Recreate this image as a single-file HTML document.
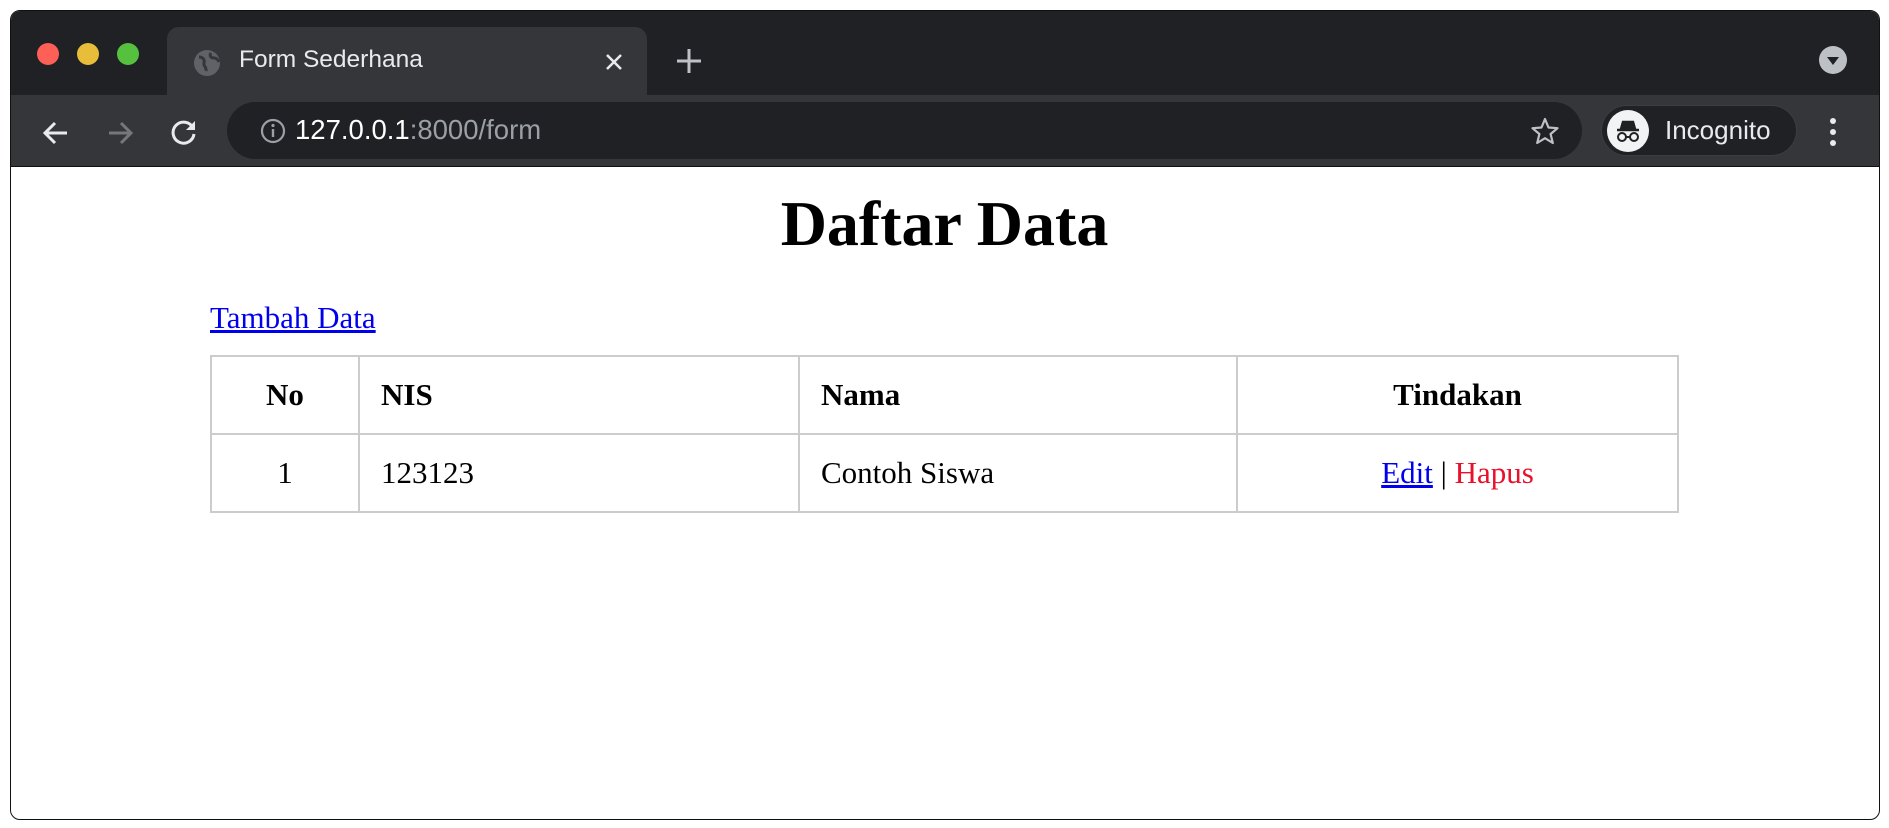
<!DOCTYPE html>
<html><head><meta charset="utf-8"><style>
*{margin:0;padding:0;box-sizing:border-box}
body{width:1889px;height:828px;background:#fff;position:relative;overflow:hidden;font-family:"Liberation Serif",serif}
.win{position:absolute;left:10px;top:10px;width:1870px;height:810px;border:1.5px solid #111;border-radius:10px;overflow:hidden;background:#fff}
.tabs{position:absolute;left:0;top:0;width:100%;height:84px;background:#202124}
.tool{position:absolute;left:0;top:84px;width:100%;height:72px;background:#35363a;border-bottom:1px solid #111}
.dot{position:absolute;top:32px;width:22px;height:22px;border-radius:50%}
.tab{position:absolute;left:156px;top:16px;width:480px;height:70px;background:#35363a;border-radius:12px 12px 0 0}
.sans{font-family:"Liberation Sans",sans-serif}
.omni{position:absolute;left:216px;top:91px;width:1355px;height:57px;background:#202124;border-radius:29px}
.pill{position:absolute;left:1590px;top:94px;width:196px;height:51px;background:#202124;border-radius:26px;border:1px solid #3c3d40}
h1{position:absolute;left:0;width:1889px;top:184px;text-align:center;font-size:64px;font-weight:bold;line-height:80px}
a{color:#0000ee}
.add{position:absolute;left:210px;top:298px;font-size:31px;line-height:40px}
table{position:absolute;left:210px;top:355px;width:1467px;border-collapse:collapse;table-layout:fixed;font-size:31px}
td,th{border:2px solid #ccc;height:78px;padding:0 21px;vertical-align:middle}
th{font-weight:bold}
</style></head><body>
<div class="win">
<div class="tabs"></div>
<div class="dot" style="left:26px;background:#fe5f57"></div>
<div class="dot" style="left:66px;background:#e8bd3a"></div>
<div class="dot" style="left:106px;background:#56c13f"></div>
<div class="tab">
 <svg style="position:absolute;left:26px;top:22px" width="28" height="28" viewBox="0 0 28 28"><circle cx="14" cy="14" r="13" fill="#5f6368"/><path d="M6 8c4 0 6 3 5 6s3 4 2 8M18 4c-2 3 0 5 3 5s4 2 5 4" stroke="#35363a" stroke-width="3" fill="none"/></svg>
 <div class="sans" style="position:absolute;left:72px;top:19px;color:#e8eaed;font-size:24.5px">Form Sederhana</div>
 <svg style="position:absolute;left:438px;top:26px" width="18" height="18" viewBox="0 0 18 18"><path d="M2 2L16 16M16 2L2 16" stroke="#e8eaed" stroke-width="2.5"/></svg>
</div>
<svg style="position:absolute;left:665px;top:37px" width="26" height="26" viewBox="0 0 26 26"><path d="M13 1V25M1 13H25" stroke="#bdc1c6" stroke-width="3"/></svg>
<svg style="position:absolute;left:1808px;top:35px" width="28" height="28" viewBox="0 0 28 28"><circle cx="14" cy="14" r="14" fill="#bdc1c6"/><path d="M8 11H20L14 19Z" fill="#202124"/></svg>
<div class="tool"></div>
<svg style="position:absolute;left:30px;top:107px" width="30" height="30" viewBox="0 0 30 30"><path d="M26 15H5M14 5L4 15L14 25" stroke="#e8eaed" stroke-width="3" fill="none"/></svg>
<svg style="position:absolute;left:94px;top:107px" width="30" height="30" viewBox="0 0 30 30"><path d="M4 15H25M16 5L26 15L16 25" stroke="#75777b" stroke-width="3" fill="none"/></svg>
<svg style="position:absolute;left:158px;top:106px" width="30" height="30" viewBox="0 0 30 30"><path d="M24 11A10.5 10.5 0 1 0 25 17" stroke="#e8eaed" stroke-width="3" fill="none"/><path d="M26 4V13H17Z" fill="#e8eaed"/></svg>
<div class="omni">
 <svg style="position:absolute;left:33px;top:16px" width="26" height="26" viewBox="0 0 26 26"><circle cx="13" cy="13" r="11" stroke="#9aa0a6" stroke-width="2.2" fill="none"/><path d="M13 11V19" stroke="#9aa0a6" stroke-width="2.4"/><circle cx="13" cy="7.5" r="1.6" fill="#9aa0a6"/></svg>
 <div class="sans" style="position:absolute;left:68px;top:12px;font-size:27.5px;color:#fff">127.0.0.1<span style="color:#9aa0a6">:8000/form</span></div>
 <svg style="position:absolute;left:1304px;top:15px" width="28" height="28" viewBox="0 0 28 28"><path d="M14 2L17.5 10.5L26.5 11.2L19.6 17L21.8 26L14 21.2L6.2 26L8.4 17L1.5 11.2L10.5 10.5Z" stroke="#bdc1c6" stroke-width="2.2" fill="none" stroke-linejoin="round"/></svg>
</div>
<div class="pill">
 <svg style="position:absolute;left:5px;top:4px" width="42" height="42" viewBox="0 0 42 42"><circle cx="21" cy="21" r="21" fill="#f1f3f4"/><path d="M14 19L16 12H26L28 19Z M10 20H32" stroke="#202124" stroke-width="2.5" fill="#202124"/><circle cx="15" cy="27" r="4" stroke="#202124" stroke-width="2" fill="none"/><circle cx="27" cy="27" r="4" stroke="#202124" stroke-width="2" fill="none"/><path d="M19 27H23" stroke="#202124" stroke-width="2"/></svg>
 <div class="sans" style="position:absolute;left:63px;top:9px;font-size:26px;color:#e8eaed">Incognito</div>
</div>
<svg style="position:absolute;left:1818px;top:106px" width="8" height="30" viewBox="0 0 8 30"><circle cx="4" cy="4" r="3" fill="#e8eaed"/><circle cx="4" cy="15" r="3" fill="#e8eaed"/><circle cx="4" cy="26" r="3" fill="#e8eaed"/></svg>
</div>
<h1>Daftar Data</h1>
<a class="add" href="#">Tambah Data</a>
<table>
<colgroup><col style="width:148px"><col style="width:440px"><col style="width:438px"><col style="width:441px"></colgroup>
<tr><th>No</th><th style="text-align:left">NIS</th><th style="text-align:left">Nama</th><th>Tindakan</th></tr>
<tr><td style="text-align:center">1</td><td>123123</td><td>Contoh Siswa</td><td style="text-align:center"><a href="#">Edit</a> | <span style="color:#e8102a">Hapus</span></td></tr>
</table>
</body></html>
